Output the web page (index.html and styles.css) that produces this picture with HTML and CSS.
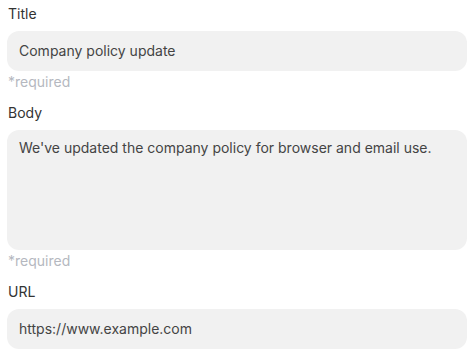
FILE: index.html
```html
<!DOCTYPE html>
<html lang="en">
<head>
  <meta charset="UTF-8" />
  <title>Notice</title>
  <link rel="stylesheet" href="styles.css">
</head>
<body>
  <form class="notice-form">
    <div class="field">
      <label class="field-label">Title</label>
      <div class="input">Company policy update</div>
      <div class="hint">*required</div>
    </div>

    <div class="field">
      <label class="field-label">Body</label>
      <div class="input textarea">We've updated the company policy for browser and email use.</div>
      <div class="hint">*required</div>
    </div>

    <div class="field">
      <label class="field-label">URL</label>
      <div class="input">https://www.example.com</div>
    </div>
  </form>
</body>
</html>
```

FILE: styles.css
```css
body {
  margin: 0;
  padding: 4px 6px 4px 7px;
  font-family: Inter, "Noto Sans", sans-serif;
  font-size: 14px;
  color: #333;
  background: #fff;
}

.notice-form {
  display: flex;
  flex-direction: column;
  gap: 11px;
}

.field {
  display: flex;
  flex-direction: column;
}

.field-label {
  line-height: 20px;
  color: #333;
  margin-bottom: 7px;
  padding-left: 1px;
}

.input {
  background: #f1f1f1;
  border-radius: 12px;
  height: 40px;
  padding: 0 12px;
  line-height: 40px;
  color: #444;
  box-sizing: border-box;
}

.textarea {
  height: 120px;
  line-height: 20px;
  padding: 8px 12px;
}

.hint {
  line-height: 20px;
  color: #b5b8c0;
  margin-top: 1px;
  padding-left: 1px;
}
```
